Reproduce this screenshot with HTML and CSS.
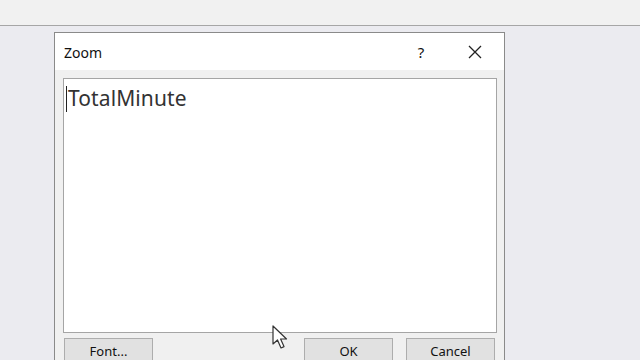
FILE: index.html
```html
<!DOCTYPE html>
<html lang="en">
<head>
  <meta charset="UTF-8" />
  <title>Zoom</title>
  <link rel="stylesheet" href="styles.css">
</head>
<body>

<div class="topbar"></div>

<div class="workspace">
  <div class="dialog">
    <div class="titlebar">
      <span class="title">Zoom</span>
      <span class="help">?</span>
      <span class="close">
        <svg width="14" height="14" viewBox="0 0 14 14">
          <path d="M1 1 L13 13 M13 1 L1 13" stroke="#222" stroke-width="1.3" fill="none"/>
        </svg>
      </span>
    </div>
    <div class="body">
      <div class="editor"><span class="caret"></span>TotalMinute</div>
      <div class="buttons">
        <button class="btn">Font...</button>
        <div class="spacer"></div>
        <button class="btn">OK</button>
        <button class="btn">Cancel</button>
      </div>
    </div>
  </div>
</div>

<!-- mouse pointer -->
<svg class="pointer" width="18" height="26" viewBox="0 0 18 26">
  <path d="M1 1 L1 19 L5.5 15 L9 23 L12 21.6 L8.6 14 L14.5 14 Z" fill="#fff" stroke="#333" stroke-width="1.2" stroke-linejoin="round"/>
</svg>

</body>
</html>
```

FILE: styles.css
```css
body {
  margin: 0;
  padding: 0;
  width: 640px;
  height: 360px;
  overflow: hidden;
  font-family: "Noto Sans", "Open Sans", sans-serif;
  background-color: #ebebf0;
  position: relative;
}

.topbar {
  height: 25px;
  background-color: #f1f1f1;
  border-bottom: 1px solid #a6a6a6;
}

.workspace {
  padding: 6px 0 0 54px;
}

.dialog {
  width: 449px;
  height: 340px;
  border: 1px solid #8a8a8a;
  background-color: #f0f0f0;
  display: flex;
  flex-direction: column;
}

.titlebar {
  height: 37px;
  background-color: #fff;
  display: flex;
  align-items: center;
  font-size: 14px;
  color: #111;
  padding-top: 1px;
  box-sizing: border-box;
}

.title {
  padding-left: 9px;
  flex: 1;
}

.help {
  width: 20px;
  text-align: center;
  font-size: 15px;
  margin-right: 37px;
}

.close {
  width: 14px;
  height: 14px;
  margin-right: 22px;
  display: flex;
}

.body {
  flex: 1;
  padding: 8px 7px 0 8px;
  display: flex;
  flex-direction: column;
}

.editor {
  box-sizing: border-box;
  height: 255px;
  border: 1px solid #a5a5a5;
  background-color: #fff;
  font-size: 21px;
  color: #333;
  padding: 5px 0 0 2px;
  line-height: 28px;
  display: flex;
  align-items: flex-start;
  letter-spacing: 0.1px;
}

.caret {
  width: 1px;
  height: 26px;
  margin-top: 2px;
  margin-right: 1px;
  background-color: #222;
}

.buttons {
  display: flex;
  gap: 13px;
  margin-top: 5px;
  padding: 0 2px 0 1px;
}

.spacer {
  flex: 1;
}

.btn {
  box-sizing: border-box;
  width: 89px;
  height: 26px;
  background-color: #e1e1e1;
  border: 1px solid #adadad;
  font-family: "Noto Sans", "Open Sans", sans-serif;
  font-size: 13px;
  line-height: 18px;
  color: #111;
  padding: 3px 0 0 0;
  display: flex;
  align-items: flex-start;
  justify-content: center;
}

.pointer {
  position: absolute;
  left: 272px;
  top: 325px;
}
```
